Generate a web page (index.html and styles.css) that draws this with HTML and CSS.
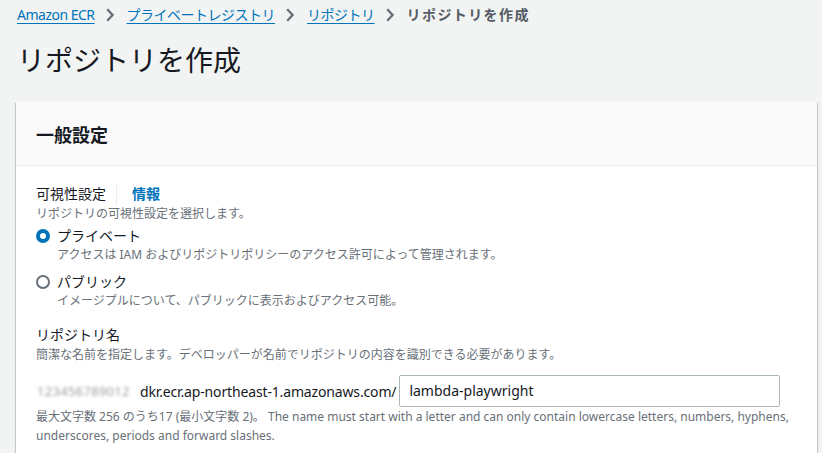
FILE: index.html
```html
<!DOCTYPE html>
<html lang="ja">
<head>
<meta charset="utf-8">
<link rel="stylesheet" href="styles.css">
</head>
<body>
<nav class="crumbs">
  <a class="crumb-link" href="#">Amazon ECR</a>
  <span class="chev"><svg width="8" height="14" viewBox="0 0 8 14"><path d="M1.2 1.2 L6.6 7 L1.2 12.8" fill="none" stroke="#687078" stroke-width="2.4"/></svg></span>
  <a class="crumb-link" href="#">プライベートレジストリ</a>
  <span class="chev"><svg width="8" height="14" viewBox="0 0 8 14"><path d="M1.2 1.2 L6.6 7 L1.2 12.8" fill="none" stroke="#687078" stroke-width="2.4"/></svg></span>
  <a class="crumb-link" href="#">リポジトリ</a>
  <span class="chev"><svg width="8" height="14" viewBox="0 0 8 14"><path d="M1.2 1.2 L6.6 7 L1.2 12.8" fill="none" stroke="#687078" stroke-width="2.4"/></svg></span>
  <span class="crumb-current">リポジトリを作成</span>
</nav>
<h1 class="page-title">リポジトリを作成</h1>
<section class="card">
  <header class="card-head"><h2>一般設定</h2></header>
  <div class="card-body">
    <div class="field">
      <div class="label-row"><span class="label">可視性設定</span><span class="info">情報</span></div>
      <div class="desc">リポジトリの可視性設定を選択します。</div>
      <div class="radio-group">
        <div class="radio">
          <span class="dot checked"></span>
          <div>
            <div class="radio-label">プライベート</div>
            <div class="desc">アクセスは IAM およびリポジトリポリシーのアクセス許可によって管理されます。</div>
          </div>
        </div>
        <div class="radio">
          <span class="dot"></span>
          <div>
            <div class="radio-label">パブリック</div>
            <div class="desc">イメージプルについて、パブリックに表示およびアクセス可能。</div>
          </div>
        </div>
      </div>
    </div>
    <div class="field">
      <div class="label">リポジトリ名</div>
      <div class="desc">簡潔な名前を指定します。デベロッパーが名前でリポジトリの内容を識別できる必要があります。</div>
      <div class="name-row">
        <span class="blur">123456789012</span>
        <span class="prefix">dkr.ecr.ap-northeast-1.amazonaws.com/</span>
        <div class="input">lambda-playwright</div>
      </div>
      <div class="help">最大文字数 256 のうち17 (最小文字数 2)。 The name must start with a letter and can only contain lowercase letters, numbers, hyphens, underscores, periods and forward slashes.</div>
    </div>
  </div>
</section>
</body>
</html>
```
FILE: styles.css
```css
html, body {
  margin: 0;
  padding: 0;
}
body {
  background: #f2f3f3;
  font-family: "Noto Sans", "Noto Sans CJK JP", sans-serif;
  color: #16191f;
  width: 822px;
  height: 453px;
  overflow: hidden;
}
.crumbs {
  display: flex;
  align-items: center;
  padding: 4px 0 0 17px;
  height: 22px;
  font-size: 14px;
  line-height: 22px;
}
.crumb-link {
  color: #0073bb;
  text-decoration: underline;
  text-underline-offset: 3px;
  letter-spacing: -0.5px;
}
.chev {
  display: flex;
  align-items: center;
  margin: 0 13px 0 11px;
}
.crumb-current {
  color: #545b64;
  font-weight: 700;
  letter-spacing: 1.4px;
}
.page-title {
  margin: 14px 0 0 17px;
  font-size: 28px;
  line-height: 40px;
  font-weight: 400;
}
.card {
  margin: 22px 5px 0 16px;
  background: #fff;
  box-shadow: 0 1px 1px 0 rgba(0,28,36,0.3), 1px 1px 1px 0 rgba(0,28,36,0.15), -1px 1px 1px 0 rgba(0,28,36,0.15);
}
.card-head {
  background: #fafafa;
  border-bottom: 1px solid #eaeded;
  height: 63px;
  display: flex;
  align-items: center;
  padding: 0 20px;
}
.card-head h2 {
  margin: 0;
  font-size: 18px;
  font-weight: 700;
}
.card-body {
  padding: 17px 20px 20px 20px;
}
.field {
  display: flex;
  flex-direction: column;
}
.field + .field {
  margin-top: 14px;
}
.label-row {
  display: flex;
  align-items: center;
}
.label {
  font-size: 14px;
  line-height: 22px;
}
.label-row .label {
  padding-right: 10px;
  border-right: 1px solid #eaeded;
}
.info {
  font-size: 14px;
  line-height: 16px;
  font-weight: 700;
  color: #0073bb;
  padding-left: 15px;
}
.desc {
  font-size: 12px;
  line-height: 18px;
  color: #687078;
}
.radio-group {
  margin-top: 3px;
  display: flex;
  flex-direction: column;
  gap: 8px;
}
.radio {
  display: flex;
  gap: 7px;
}
.radio-label {
  font-size: 14px;
  line-height: 20px;
}
.dot {
  box-sizing: border-box;
  width: 14px;
  height: 14px;
  margin-top: 3px;
  border-radius: 50%;
  border: 2px solid #687078;
  background: #fff;
  flex: none;
}
.dot.checked {
  border: 4px solid #0073bb;
}
.name-row {
  margin-top: 11px;
  display: flex;
  align-items: center;
}
.blur {
  flex: none;
  width: 101px;
  margin-left: 1px;
  overflow: hidden;
  white-space: nowrap;
  font-size: 13px;
  letter-spacing: 0.3px;
  color: #9aa0a6;
  filter: blur(1.4px);
}
.prefix {
  flex: none;
  margin-left: 2px;
  font-size: 14px;
  letter-spacing: -0.15px;
  color: #16191f;
  white-space: nowrap;
}
.input {
  box-sizing: border-box;
  margin-left: 3px;
  width: 381px;
  height: 32px;
  border: 1px solid #aab7b8;
  border-radius: 2px;
  padding: 0 9px;
  font-size: 14px;
  line-height: 30px;
}
.help {
  margin-top: 0;
  font-size: 12px;
  line-height: 19px;
  color: #687078;
}
```
